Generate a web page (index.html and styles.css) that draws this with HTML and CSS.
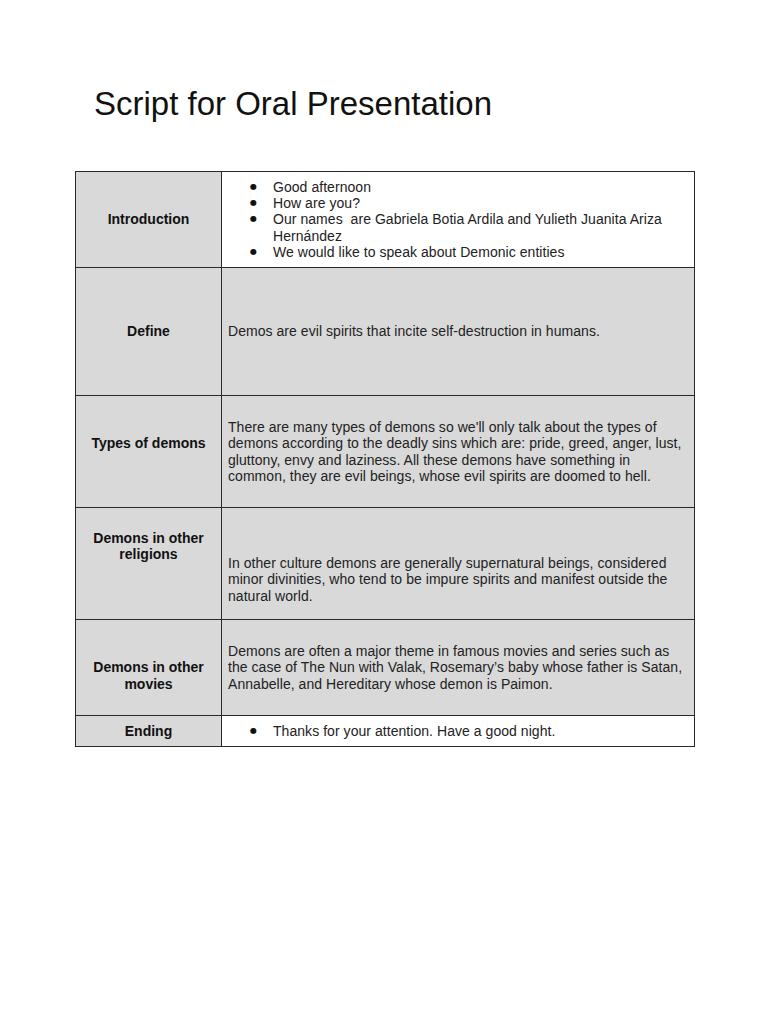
FILE: index.html
```html
<!DOCTYPE html>
<html>
<head>
<meta charset="utf-8">
<link rel="stylesheet" href="styles.css">
</head>
<body>
<div class="page">
  <h1 class="title">Script for Oral Presentation</h1>
  <table class="script">
    <colgroup>
      <col class="col-label">
      <col class="col-content">
    </colgroup>
    <tr class="r-intro">
      <th class="label">Introduction</th>
      <td class="content white">
        <ul class="bullets">
          <li>Good afternoon</li>
          <li>How are you?</li>
          <li>Our names&nbsp; are Gabriela Botia Ardila and Yulieth Juanita Ariza Hernández</li>
          <li>We would like to speak about Demonic entities</li>
        </ul>
      </td>
    </tr>
    <tr class="r-define">
      <th class="label">Define</th>
      <td class="content">Demos are evil spirits that incite self-destruction in humans.</td>
    </tr>
    <tr class="r-types">
      <th class="label"><span class="lab-types">Types of demons</span></th>
      <td class="content">There are many types of demons so we'll only talk about the types of demons according to the deadly sins which are: pride, greed, anger, lust, gluttony, envy and laziness. All these demons have something in common, they are evil beings, whose evil spirits are doomed to hell.</td>
    </tr>
    <tr class="r-rel">
      <th class="label top">Demons in other religions</th>
      <td class="content rel">In other culture demons are generally supernatural beings, considered minor divinities, who tend to be impure spirits and manifest outside the natural world.</td>
    </tr>
    <tr class="r-movies">
      <th class="label"><span class="lab-movies">Demons in other movies</span></th>
      <td class="content">Demons are often a major theme in famous movies and series such as the case of The Nun with Valak, Rosemary’s baby whose father is Satan, Annabelle, and Hereditary whose demon is Paimon.</td>
    </tr>
    <tr class="r-end">
      <th class="label">Ending</th>
      <td class="content white">
        <ul class="bullets">
          <li>Thanks for your attention. Have a good night.</li>
        </ul>
      </td>
    </tr>
  </table>
</div>
</body>
</html>
```
FILE: styles.css
```css
html, body {
  margin: 0;
  padding: 0;
  background: #ffffff;
}
body {
  font-family: "Liberation Sans", Arial, sans-serif;
  color: #1a1a1a;
}
.page {
  padding: 84px 0 0 75px;
}
.title {
  margin: 0 0 47px 19px;
  font-weight: normal;
  font-size: 33px;
  line-height: 40px;
  color: #111111;
}
.script {
  border-collapse: collapse;
  width: 619px;
  table-layout: fixed;
}
.col-label { width: 146px; }
.col-content { width: 473px; }
.script th, .script td {
  border: 1px solid #2a2a2a;
  background: #d9d9d9;
  font-size: 14px;
  line-height: 16.3px;
  vertical-align: middle;
}
.label {
  padding: 0 6px;
  font-weight: bold;
  text-align: center;
  color: #111111;
}
.content {
  padding: 0 7px 0 6px;
  text-align: left;
  font-weight: normal;
  color: #222222;
  letter-spacing: 0.05px;
}
.script td.white {
  background: #ffffff;
}
.bullets {
  margin: 0;
  padding: 0 0 0 22px;
  list-style: none;
}
.bullets li {
  display: grid;
  grid-template-columns: 23px 1fr;
}
.bullets li::before {
  content: "●";
  font-family: "DejaVu Sans", sans-serif;
  font-size: 8px;
  line-height: 16.3px;
  color: #111111;
}
.r-intro { height: 96px; }
.r-define { height: 128px; }
.r-types { height: 112px; }
.r-rel { height: 112px; }
.r-movies { height: 96px; }
.r-end { height: 31px; }
.lab-types {
  display: block;
  padding-bottom: 16px;
}
.label.top {
  vertical-align: top;
  padding-top: 22px;
}
.content.rel {
  padding-top: 32px;
}
.lab-movies {
  display: block;
  padding-top: 16px;
}
```
